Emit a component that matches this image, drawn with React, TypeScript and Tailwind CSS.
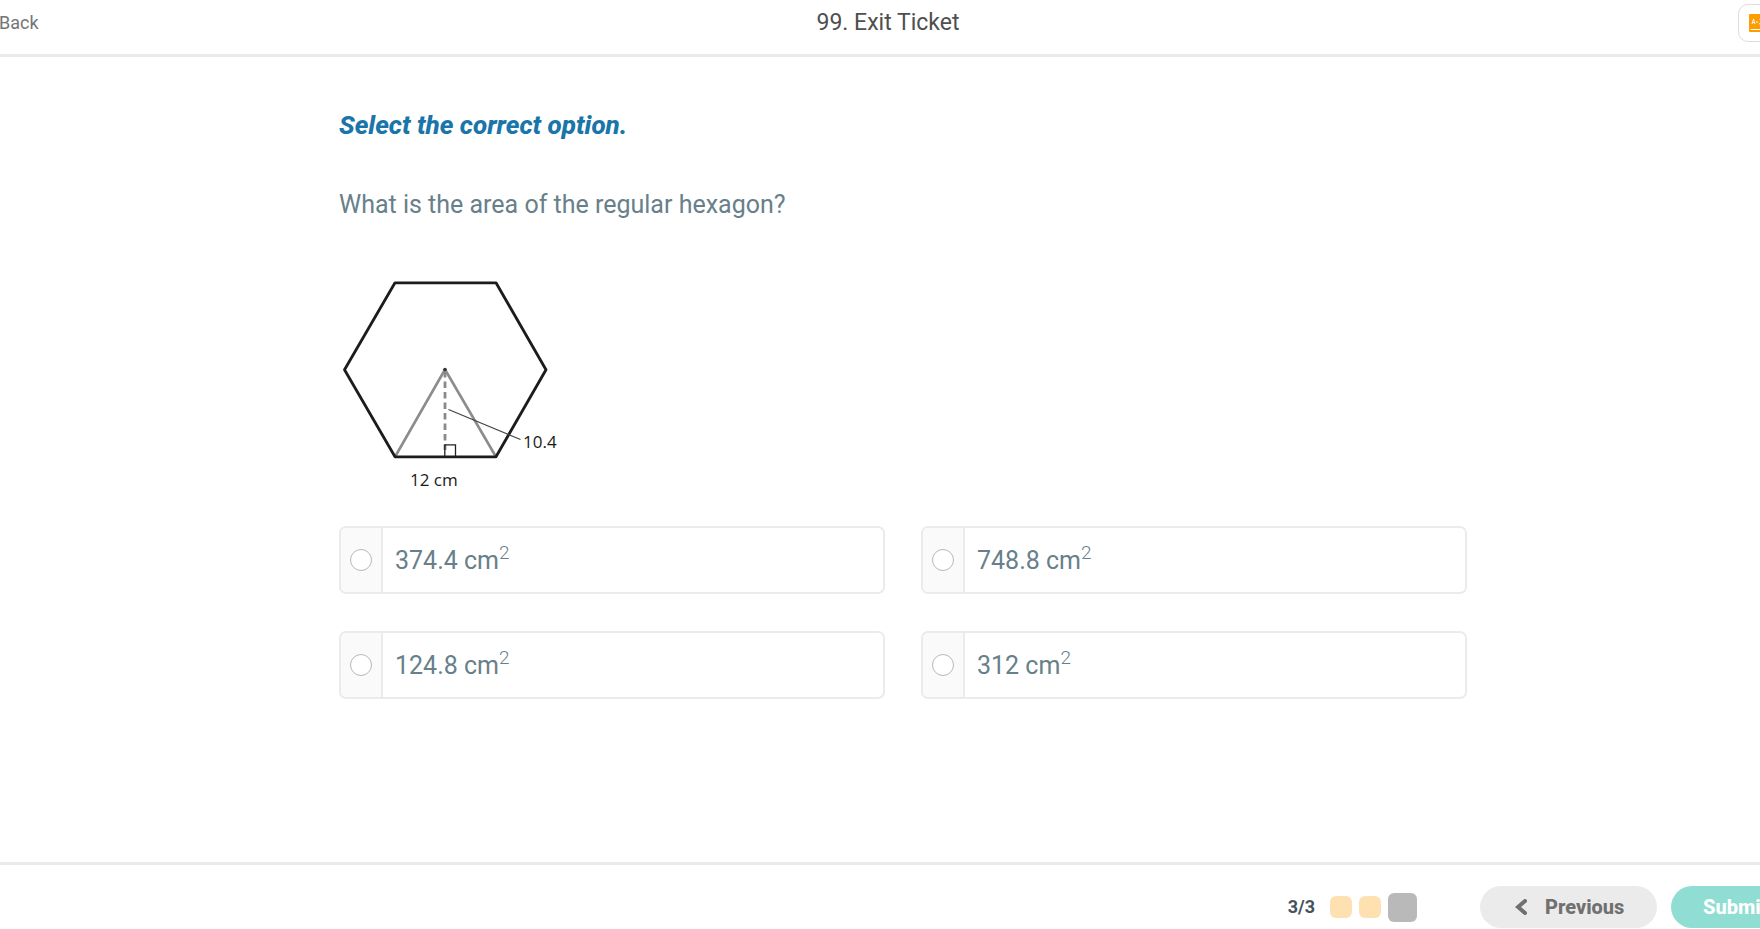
import React, { useState } from "react";

type Option = { id: string; value: string };

const options: Option[] = [
  { id: "a", value: "374.4" },
  { id: "b", value: "748.8" },
  { id: "c", value: "124.8" },
  { id: "d", value: "312" },
];

const HexagonFigure: React.FC = () => (
  <svg
    width="240"
    height="250"
    viewBox="0 0 240 250"
    fill="none"
    role="img"
    aria-label="Regular hexagon"
    className="block -ml-[9px] font-['Open_Sans',sans-serif] text-[17px]"
  >
    <path d="M115 109.5L65.5 196M115 109.5L165.5 196" stroke="#8c8c8c" strokeWidth="2.6" />
    <path d="M115 111V190" stroke="#8a8a8a" strokeWidth="2.8" strokeDasharray="6.5 4" />
    <path
      d="M65 22.8H166L216 109.7L166 196.8H65L14.5 109.7Z"
      stroke="#1c1c1c"
      strokeWidth="2.8"
      strokeLinejoin="round"
    />
    <circle cx="115" cy="109.5" r="1.8" fill="#333" />
    <path d="M114.5 184.8H125.5V196" stroke="#222" strokeWidth="1.3" />
    <path d="M114.8 184.5V196" stroke="#222" strokeWidth="1.3" />
    <path d="M118.5 149.5L190.5 179.5" stroke="#444" strokeWidth="1.2" />
    <text x="193" y="188" fill="#1a1a1a">10.4</text>
    <text x="80" y="226" fill="#1a1a1a">12 cm</text>
  </svg>
);

const OptionCard: React.FC<{
  option: Option;
  checked: boolean;
  onSelect: () => void;
}> = ({ option, checked, onSelect }) => {
  return (
    <label className="flex h-[68px] cursor-pointer overflow-hidden rounded-[7px] border-2 border-[#ebebeb] bg-white">
      <span className="flex w-[42px] shrink-0 items-center justify-center border-r-2 border-[#ebebeb] bg-[#fafafa]">
        <input
          type="radio"
          name="answer"
          value={option.id}
          checked={checked}
          onChange={onSelect}
          className="size-[22px] appearance-none rounded-full border border-[#b8b8b8] bg-white checked:border-[7px] checked:border-[#1a75a8]"
        />
      </span>
      <span className="flex items-center px-3 pt-px text-[25px] text-[#67808a]">
        <span>
          {option.value} cm<sup className="-top-[10px] text-[19px] font-light">2</sup>
        </span>
      </span>
    </label>
  );
};

const App: React.FC = () => {
  const [selected, setSelected] = useState<string | null>(null);

  return (
    <div className="flex h-screen flex-col overflow-hidden bg-white font-[Roboto,sans-serif]">
      {/* Header */}
      <header className="flex h-[57px] shrink-0 items-center border-b-3 border-[#eaeaea] pb-2">
        <div className="flex-1">
          <a href="#" className="-ml-px text-lg text-[#757575]">
            Back
          </a>
        </div>
        <h1 className="pl-4 text-[23px] text-[#4f4f4f]">99. Exit Ticket</h1>
        <div className="flex flex-1 justify-end">
          <button
            type="button"
            aria-label="Dictionary"
            className="-mr-4 flex h-[38px] w-[38px] shrink-0 items-center rounded-[10px] border border-[#dddddd] pl-[10px]"
          >
            <svg width="18" height="18" viewBox="0 0 18 18" fill="none" className="shrink-0">
              <rect width="18" height="18" rx="1" fill="#ff9d00" />
              <path
                d="M3 10L4.5 5L6 10M3.5 8.5H5.5M7 8H9M10.5 5.5H14L10.5 10H14"
                stroke="#fff"
                strokeWidth="1"
              />
              <path d="M1.5 15.5H18" stroke="#fff" strokeWidth="1" />
            </svg>
          </button>
        </div>
      </header>

      {/* Question */}
      <main className="min-h-0 flex-1 overflow-hidden pl-[46px]">
        <form className="mx-auto max-w-[1128px] pt-[52px]">
          <h2 className="text-[26px] font-extrabold leading-8 italic text-[#1a75a8]">
            Select the correct option.
          </h2>
          <p className="mt-12 mb-[39px] text-[25px] leading-8 text-[#67808a]">
            What is the area of the regular hexagon?
          </p>
          <HexagonFigure />
          <div className="mt-4 grid grid-cols-2 gap-x-9 gap-y-[37px]">
            {options.map((option) => (
              <OptionCard
                key={option.id}
                option={option}
                checked={selected === option.id}
                onSelect={() => setSelected(option.id)}
              />
            ))}
          </div>
        </form>
      </main>

      {/* Footer */}
      <footer className="flex h-[67px] shrink-0 items-center justify-end border-t-3 border-[#eaeaea] pt-5">
        <span className="mr-[15px] text-lg font-bold text-[#46525c]">3/3</span>
        <div className="flex shrink-0 items-center gap-[7px]">
          <span className="size-[22px] rounded-md bg-[#ffe0b0]" />
          <span className="size-[22px] rounded-md bg-[#ffe0b0]" />
          <span className="size-[29px] rounded-md bg-[#b9b9b9]" />
        </div>
        <button
          type="button"
          className="ml-[63px] flex h-[42px] w-[177px] shrink-0 items-center gap-[18px] rounded-full bg-[#ebebeb] pl-[35px] text-xl font-extrabold text-[#707070]"
        >
          <svg width="12" height="16" viewBox="0 0 12 16" fill="none">
            <path d="M10 2L3 8L10 14" stroke="currentColor" strokeWidth="4" strokeLinecap="round" />
          </svg>
          Previous
        </button>
        <button
          type="button"
          className="-mr-11 ml-[14px] h-[42px] w-[133px] shrink-0 rounded-full bg-[#90ddd3] pl-8 text-left text-xl font-extrabold text-white"
        >
          Submit
        </button>
      </footer>
    </div>
  );
};

export default App;
